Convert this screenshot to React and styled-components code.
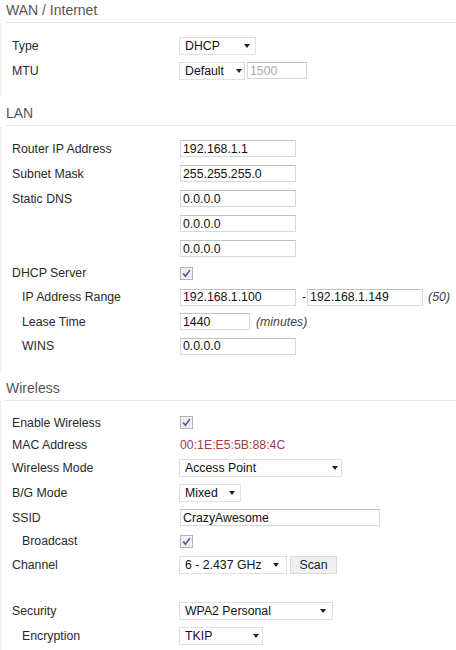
import React from "react";
import styled, { createGlobalStyle } from "styled-components";

const GlobalStyle = createGlobalStyle`
	html, body {
		margin: 0;
		padding: 0;
		background: #fff;
	}
	body {
		font-family: "Liberation Sans", Arial, sans-serif;
		font-size: 12.3px;
		color: #2a2a2a;
	}
`;

const Page = styled.div`
	width: 456px;
	padding-top: 1px;
`;

const Heading = styled.h2`
	margin: 0 0 0 5px;
	padding: 0 0 3px 1px;
	height: 18px;
	line-height: 18px;
	font-size: 14px;
	font-weight: normal;
	color: #555;
	border-bottom: 1px solid #e6e6e6;
`;

const Body = styled.div`
	border-left: 1px solid #ededed;
	padding: 10px 0 13px;
	margin-bottom: 8px;
`;

const Row = styled.div`
	display: grid;
	grid-template-columns: 179px auto;
	align-items: center;
	height: ${(p) => p.$h || 25}px;
`;

const Label = styled.div`
	padding-left: ${(p) => (p.$indent ? 21 : 11)}px;
	color: #2a2a2a;
	white-space: nowrap;
`;

const Controls = styled.div`
	display: flex;
	align-items: center;
`;

const Spacer = styled.div`
	height: ${(p) => p.$h}px;
`;

const TextInput = styled.input`
	width: ${(p) => p.$w || 116}px;
	height: 17px;
	box-sizing: border-box;
	margin: 0;
	padding: 0 2px;
	border: 1px solid #d8d8d8;
	border-top-color: #c2c2c2;
	border-radius: 0;
	background: #fff;
	font: 12.3px "Liberation Sans", Arial, sans-serif;
	color: ${(p) => (p.disabled ? "#ababab" : "#111")};
	outline: none;
	margin-left: ${(p) => p.$ml || 0}px;
`;

const SelectWrap = styled.div`
	position: relative;
	width: ${(p) => p.$w}px;
	height: 18px;
	margin-left: -1px;

	&::after {
		content: "";
		position: absolute;
		right: ${(p) => p.$ar || 6}px;
		top: 7px;
		border-left: 3px solid transparent;
		border-right: 3px solid transparent;
		border-top: 4px solid #222;
		pointer-events: none;
	}
`;

const SelectBox = styled.select`
	appearance: none;
	-webkit-appearance: none;
	width: 100%;
	height: 100%;
	box-sizing: border-box;
	margin: 0;
	padding: 0 0 0 5px;
	border: 1px solid #e0e0e0;
	border-radius: 0;
	background: #fff;
	font: 12.3px "Liberation Sans", Arial, sans-serif;
	color: #111;
	outline: none;
`;

const Button = styled.button`
	margin: 0 0 0 3px;
	width: 47px;
	height: 18px;
	box-sizing: border-box;
	padding: 0;
	border: 1px solid #dadada;
	border-radius: 0;
	background: #efefef;
	font: 12.3px "Liberation Sans", Arial, sans-serif;
	color: #222;
`;

const Dash = styled.span`
	margin: 0 1px 0 6px;
	color: #333;
`;

const Note = styled.span`
	margin-left: ${(p) => p.$ml || 6}px;
	font-style: italic;
	color: #444;
`;

const Mac = styled.span`
	color: #a83c3c;
`;

const CheckSvg = styled.svg`
	display: block;
`;

const Check = () => (
	<CheckSvg width="13" height="13" viewBox="0 0 13 13">
		<rect x="0.5" y="0.5" width="12" height="12" fill="#f7f7fa" stroke="#b4b4b4" />
		<rect x="1.5" y="1.5" width="10" height="10" fill="#ecedf3" />
		<path d="M3.2 6.4 L5.4 9.2 L9.9 3.1" fill="none" stroke="#4a5a8c" strokeWidth="1.6" />
	</CheckSvg>
);

const Select = ({ w, ar, value }) => (
	<SelectWrap $w={w} $ar={ar}>
		<SelectBox defaultValue={value}>
			<option>{value}</option>
		</SelectBox>
	</SelectWrap>
);

const App = () => {
	return (
		<Page>
			<GlobalStyle />

			<Heading>WAN / Internet</Heading>
			<Body>
				<Row>
					<Label>Type</Label>
					<Controls>
						<Select w={77} ar={6} value="DHCP" />
					</Controls>
				</Row>
				<Row>
					<Label>MTU</Label>
					<Controls>
						<Select w={66} ar={3} value="Default" />
						<TextInput $w={60} $ml={2} disabled defaultValue="1500" />
					</Controls>
				</Row>
			</Body>

			<Heading>LAN</Heading>
			<Body>
				<Row>
					<Label>Router IP Address</Label>
					<Controls>
						<TextInput defaultValue="192.168.1.1" />
					</Controls>
				</Row>
				<Row>
					<Label>Subnet Mask</Label>
					<Controls>
						<TextInput defaultValue="255.255.255.0" />
					</Controls>
				</Row>
				<Row>
					<Label>Static DNS</Label>
					<Controls>
						<TextInput defaultValue="0.0.0.0" />
					</Controls>
				</Row>
				<Row>
					<Label />
					<Controls>
						<TextInput defaultValue="0.0.0.0" />
					</Controls>
				</Row>
				<Row>
					<Label />
					<Controls>
						<TextInput defaultValue="0.0.0.0" />
					</Controls>
				</Row>
				<Row $h={24}>
					<Label>DHCP Server</Label>
					<Controls>
						<Check />
					</Controls>
				</Row>
				<Row $h={24}>
					<Label $indent>IP Address Range</Label>
					<Controls>
						<TextInput defaultValue="192.168.1.100" />
						<Dash>-</Dash>
						<TextInput defaultValue="192.168.1.149" />
						<Note $ml={5}>(50)</Note>
					</Controls>
				</Row>
				<Row>
					<Label $indent>Lease Time</Label>
					<Controls>
						<TextInput $w={70} defaultValue="1440" />
						<Note>(minutes)</Note>
					</Controls>
				</Row>
				<Row $h={24}>
					<Label $indent>WINS</Label>
					<Controls>
						<TextInput defaultValue="0.0.0.0" />
					</Controls>
				</Row>
			</Body>

			<Heading>Wireless</Heading>
			<Body>
				<Row $h={23}>
					<Label>Enable Wireless</Label>
					<Controls>
						<Check />
					</Controls>
				</Row>
				<Row $h={22}>
					<Label>MAC Address</Label>
					<Controls>
						<Mac>00:1E:E5:5B:88:4C</Mac>
					</Controls>
				</Row>
				<Row $h={24}>
					<Label>Wireless Mode</Label>
					<Controls>
						<Select w={163} ar={4} value="Access Point" />
					</Controls>
				</Row>
				<Row>
					<Label>B/G Mode</Label>
					<Controls>
						<Select w={62} ar={6} value="Mixed" />
					</Controls>
				</Row>
				<Row>
					<Label>SSID</Label>
					<Controls>
						<TextInput $w={200} defaultValue="CrazyAwesome" />
					</Controls>
				</Row>
				<Row $h={22}>
					<Label $indent>Broadcast</Label>
					<Controls>
						<Check />
					</Controls>
				</Row>
				<Row>
					<Label>Channel</Label>
					<Controls>
						<Select w={108} ar={8} value="6 - 2.437 GHz" />
						<Button>Scan</Button>
					</Controls>
				</Row>
				<Spacer $h={21} />
				<Row>
					<Label>Security</Label>
					<Controls>
						<Select w={154} ar={7} value="WPA2 Personal" />
					</Controls>
				</Row>
				<Row>
					<Label $indent>Encryption</Label>
					<Controls>
						<Select w={84} ar={4} value="TKIP" />
					</Controls>
				</Row>
			</Body>
		</Page>
	);
};

export default App;
